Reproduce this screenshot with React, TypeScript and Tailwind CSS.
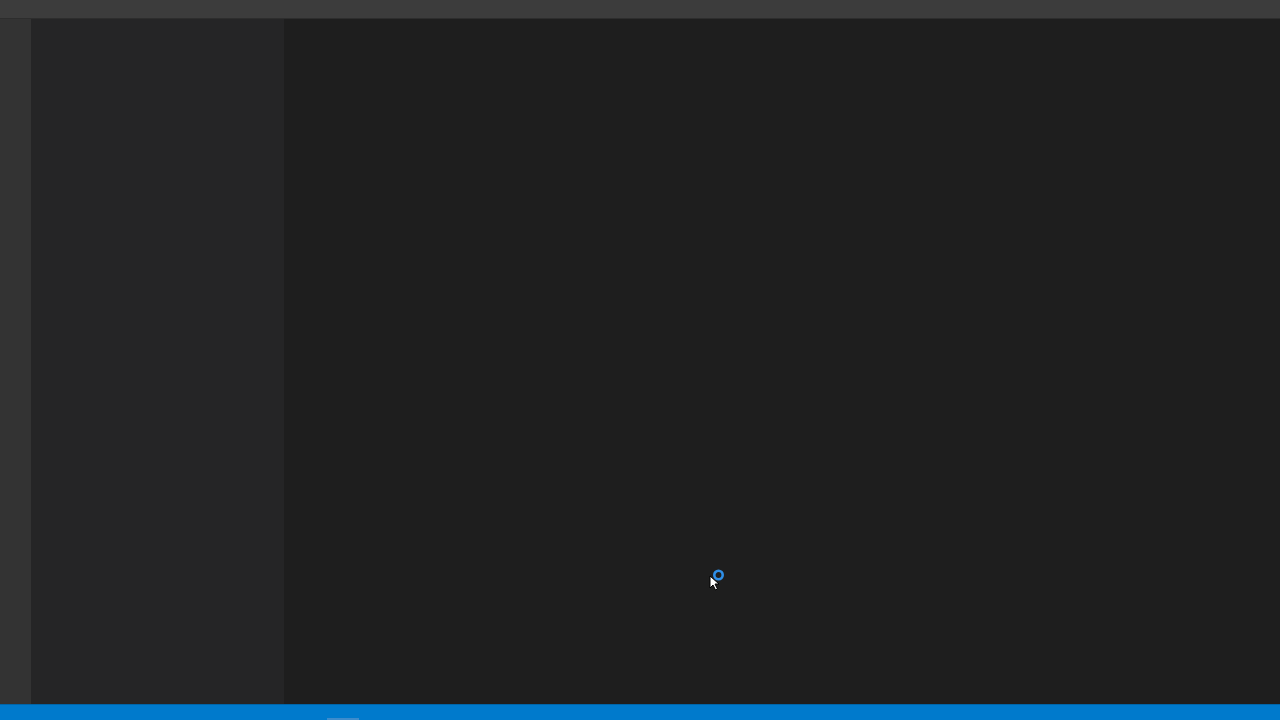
export default function App() {
  return (
    <div className="w-[1280px] h-[720px] flex flex-col overflow-hidden bg-[#1e1e1e] font-['Liberation_Sans',sans-serif]">
      {/* Title bar */}
      <div className="h-[19px] shrink-0 bg-[#3c3c3c] border-b border-[#2d2d2d]" />
      <div className="flex-1 flex min-h-0">
        {/* Activity bar */}
        <div className="w-[31px] shrink-0 bg-[#333333]" />
        {/* Side bar */}
        <div className="w-[253px] shrink-0 bg-[#252526]" />
        {/* Editor */}
        <div className="flex-1 relative bg-[#1e1e1e]">
          {/* busy cursor */}
          <svg className="absolute left-[425px] top-[550px]" width="22" height="24" viewBox="0 0 22 24">
            <path d="M1 7 L1 19 L4 16 L6.5 21 L8.5 20 L6 15 L10 15 Z" fill="#ffffff" stroke="#000000" strokeWidth="1" />
            <circle cx="9.5" cy="6" r="4.2" fill="none" stroke="#2f8fe8" strokeWidth="2.6" />
          </svg>
        </div>
      </div>
      {/* Status bar */}
      <div className="h-[16px] shrink-0 bg-[#007acc] border-t border-[#0065a9] relative">
        <div className="absolute left-[327px] bottom-0 w-[32px] h-[2px] bg-[#3d8ccc]" />
      </div>
    </div>
  );
}
